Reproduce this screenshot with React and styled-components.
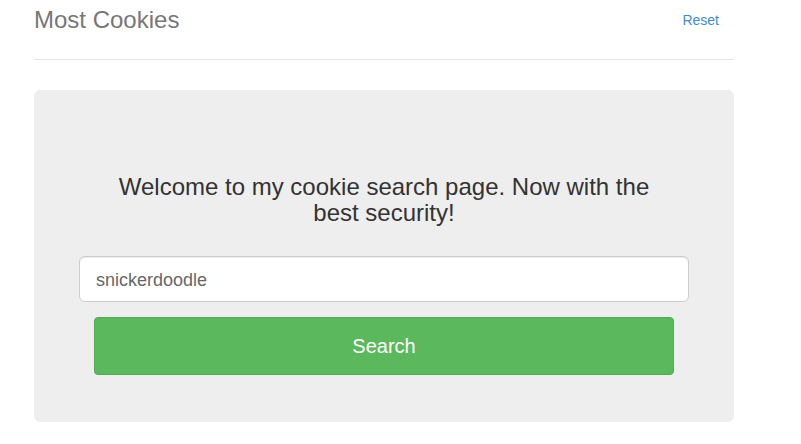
import React from 'react'
import styled, { createGlobalStyle } from 'styled-components'

const GlobalStyle = createGlobalStyle`
  html, body {
    margin: 0;
    padding: 0;
    background: #fff;
    font-family: "Liberation Sans", Arial, Helvetica, sans-serif;
    font-size: 14px;
    line-height: 1.42857;
    color: #333;
  }
  * { box-sizing: border-box; }
`

const Container = styled.div`
  width: 700px;
  margin-left: 34px;
`

const Header = styled.div`
  display: flex;
  justify-content: space-between;
  align-items: flex-start;
  height: 60px;
  border-bottom: 1px solid #e5e5e5;
`

const Title = styled.h3`
  margin: 7px 0 0;
  font-size: 24px;
  font-weight: 500;
  line-height: 1.1;
  color: #777;
`

const Nav = styled.ul`
  display: flex;
  list-style: none;
  margin: 1px 0 0;
  padding: 0;
`

const NavLink = styled.a`
  display: block;
  padding: 10px 15px;
  color: #428bca;
  text-decoration: none;
  border-radius: 4px;
  cursor: pointer;
`

const Jumbotron = styled.div`
  margin-top: 30px;
  background: #eee;
  border-radius: 6px;
  padding: 84px 45px 47px;
  display: flex;
  flex-direction: column;
  align-items: center;
`

const Heading = styled.h3`
  margin: 0;
  max-width: 560px;
  text-align: center;
  font-size: 24px;
  font-weight: 500;
  line-height: 1.1;
  color: #333;
`

const Form = styled.form`
  margin-top: 29px;
  width: 100%;
  display: flex;
  flex-direction: column;
  align-items: center;
`

const Input = styled.input`
  width: 100%;
  height: 46px;
  padding: 12px 16px 8px;
  font-family: inherit;
  font-size: 18px;
  line-height: 1.33;
  color: #555;
  background: #fff;
  border: 1px solid #ccc;
  border-radius: 6px;
  box-shadow: inset 0 1px 1px rgba(0, 0, 0, 0.075);
  outline: none;
  &::placeholder { color: #666; opacity: 1; }
`

const Button = styled.button`
  margin-top: 15px;
  width: ${(p) => p.$width}px;
  height: 58px;
  padding-top: 2px;
  font-family: inherit;
  font-size: 20px;
  color: #fff;
  background: #5cb85c;
  border: 1px solid #4cae4c;
  border-radius: 4px;
  cursor: pointer;
`

export default function App() {
  return (
    <>
      <GlobalStyle />
      <Container>
        <Header>
          <Title>Most Cookies</Title>
          <Nav>
            <li><NavLink href="#">Reset</NavLink></li>
          </Nav>
        </Header>
        <Jumbotron>
          <Heading>Welcome to my cookie search page. Now with the best security!</Heading>
          <Form onSubmit={(e) => e.preventDefault()}>
            <Input type="text" name="name" placeholder="snickerdoodle" />
            <Button type="submit" $width={580}>Search</Button>
          </Form>
        </Jumbotron>
      </Container>
    </>
  )
}
